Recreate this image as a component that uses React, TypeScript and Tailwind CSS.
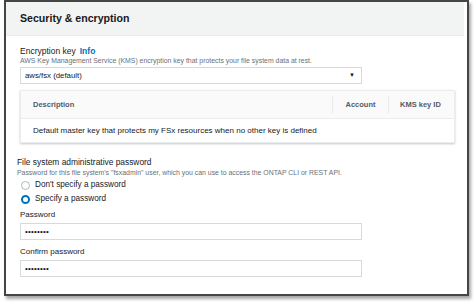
const font = { fontFamily: '"Liberation Sans", Arial, sans-serif' };

function Radio({ checked, label }: { checked?: boolean; label: string }) {
  return (
    <div className="flex items-center h-[14px] pl-[4px] gap-[5px]">
      {checked ? (
        <span className="w-[9px] h-[9px] rounded-full border-[2.5px] border-[#0073bb] bg-white" />
      ) : (
        <span className="w-[9px] h-[9px] rounded-full border border-[#aab7b8] bg-white" />
      )}
      <span className="text-[8.2px] text-[#16191f]">{label}</span>
    </div>
  );
}

function PasswordInput() {
  return (
    <div className="w-[342px] h-[17px] border border-[#d5dbdb] bg-white flex items-center pl-[4px]">
      <span className="text-[8px] leading-none tracking-[0.2px] text-[#16191f]">••••••••</span>
    </div>
  );
}

export default function App() {
  return (
    <div className="w-[474px] h-[304px] bg-white pl-[4px]" style={font}>
      <div className="w-[465px] h-[296px] border-2 border-[#454545] bg-white flex flex-col shadow-[2px_3px_3px_rgba(0,0,0,0.35)]">
        <div className="h-[34px] mr-[3px] bg-[#f2f3f3] border-b border-[#eaeded] flex items-center pl-[14px]">
          <h2 className="text-[10.6px] font-bold text-[#16191f]">Security &amp; encryption</h2>
        </div>

        <div className="flex flex-col pl-[14px] pt-[10px]">
          <div className="flex items-center gap-[4px] h-[10px]">
            <span className="text-[8.5px] text-[#16191f]">Encryption key</span>
            <span className="text-[8.5px] font-bold text-[#0073bb]">Info</span>
          </div>
          <p className="text-[6.9px] text-[#687078] h-[9px] leading-[9px]">
            AWS Key Management Service (KMS) encryption key that protects your file system data at rest.
          </p>
          <div className="mt-[2px] w-[342px] h-[17px] border border-[#d5dbdb] bg-white flex items-center justify-between pl-[4px] pr-[6px]">
            <span className="text-[7.8px] text-[#16191f]">aws/fsx (default)</span>
            <span className="text-[6px] text-[#16191f]">▼</span>
          </div>

          <div className="mt-[6px] w-[435px] border border-[#eaeded] shadow-[0_1px_2px_rgba(0,0,0,0.22)] bg-white">
            <div className="h-[27px] bg-[#fafafa] flex items-center text-[7.5px] font-bold text-[#545b64]">
              <div className="flex-1 pl-[12px]">Description</div>
              <div className="h-[18px] border-l border-[#eaeded] w-[56px] flex items-center justify-center">Account</div>
              <div className="h-[18px] border-l border-[#eaeded] w-[66px] flex items-center pl-[11px]">KMS key ID</div>
            </div>
            <div className="h-[24px] flex items-center pl-[12px] text-[8px] text-[#16191f] border-t border-[#eaeded]">
              Default master key that protects my FSx resources when no other key is defined
            </div>
          </div>

          <div className="mt-[14px] -ml-[3px] flex flex-col">
            <span className="text-[8.4px] text-[#16191f] h-[11px] leading-[11px]">File system administrative password</span>
            <p className="text-[6.9px] text-[#687078] h-[9px] leading-[9px]">
              Password for this file system's "fsxadmin" user, which you can use to access the ONTAP CLI or REST API.
            </p>
            <div className="mt-[1px] flex flex-col">
              <Radio label="Don't specify a password" />
              <Radio checked label="Specify a password" />
            </div>
          </div>

          <div className="mt-[3px] flex flex-col">
            <span className="text-[8px] text-[#16191f] h-[12px] leading-[12px]">Password</span>
            <div className="mt-[2px]">
              <PasswordInput />
            </div>
            <span className="mt-[6px] text-[8px] text-[#16191f] h-[12px] leading-[12px]">Confirm password</span>
            <div className="mt-[2px]">
              <PasswordInput />
            </div>
          </div>
        </div>
      </div>
    </div>
  );
}
